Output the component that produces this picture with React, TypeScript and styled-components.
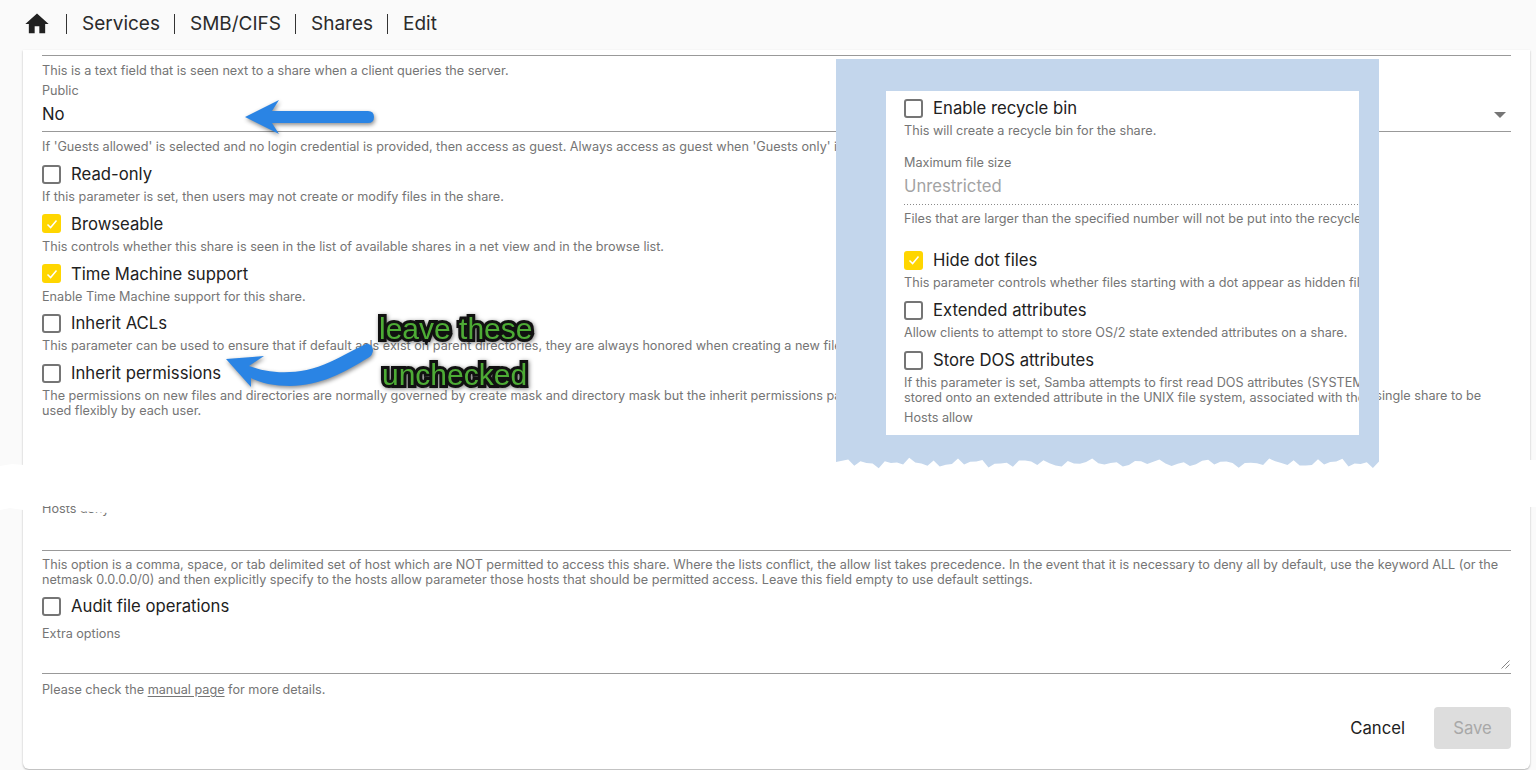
import styled, { createGlobalStyle } from 'styled-components';

type CheckItem = {
  label: string;
  help: string[];
  checked?: boolean;
};

const crumbs = ['Services', 'SMB/CIFS', 'Shares', 'Edit'];

const shareOptions: CheckItem[] = [
  { label: 'Read-only', help: ['If this parameter is set, then users may not create or modify files in the share.'] },
  {
    label: 'Browseable',
    checked: true,
    help: ['This controls whether this share is seen in the list of available shares in a net view and in the browse list.'],
  },
  { label: 'Time Machine support', checked: true, help: ['Enable Time Machine support for this share.'] },
  {
    label: 'Inherit ACLs',
    help: ['This parameter can be used to ensure that if default acls exist on parent directories, they are always honored when creating a new file or subdirectory.'],
  },
  {
    label: 'Inherit permissions',
    help: ['The permissions on new files and directories are normally governed by create mask and directory mask but the inherit permissions parameter overrides this. This can be particularly useful on sites with many users to allow a single share to be used flexibly by each user.'],
  },
];

// torn lower edge of the pasted crop, y values in px from the top of the crop
const tornEdge = Array.from({ length: 90 }, (_, i) => {
  const x = 543 - (i * 543) / 89;
  const y = 404 + 2.4 * Math.sin(i * 1.7) + 1.6 * Math.sin(i * 0.63) - 1.6 * Math.cos(i * 3.1);
  return `${x.toFixed(1)}px ${y.toFixed(1)}px`;
}).join(', ');

const Check = ({ checked }: { checked?: boolean }) => (
  <CheckBox $checked={checked}>
    {checked && (
      <svg width='14' height='14' viewBox='0 0 14 14' fill='none'>
        <path d='M2.5 7.5 L5.6 10.6 L11.5 3.5' stroke='#fff' strokeWidth='1.5' />
      </svg>
    )}
  </CheckBox>
);

export default function App() {
  return (
    <Page>
      <GlobalStyle />

      {/* breadcrumb */}
      <TopBar>
        <HomeIcon viewBox='0 0 24 24'>
          <path d='M10 20v-6h4v6h5v-8h3L12 3 2 12h3v8z' />
        </HomeIcon>
        {crumbs.map((c) => (
          <Crumb key={c}>{c}</Crumb>
        ))}
      </TopBar>

      <Card>
        <FieldLine />
        <Help $top={7}>This is a text field that is seen next to a share when a client queries the server.</Help>

        <FieldLabel $top={6}>Public</FieldLabel>
        <SelectField>
          <span>No</span>
          <Caret />
        </SelectField>
        <Help $top={7}>
          If 'Guests allowed' is selected and no login credential is provided, then access as guest. Always access as guest when 'Guests only' is selected.
        </Help>

        <OptionList>
          {shareOptions.map((item) => (
            <div key={item.label}>
              <CheckRow>
                <Check checked={item.checked} />
                {item.label}
              </CheckRow>
              {item.help.map((h) => (
                <Help key={h}>{h}</Help>
              ))}
            </div>
          ))}
        </OptionList>

        <FieldLabel $top={84}>Hosts deny</FieldLabel>
        <BlankField $height={30} />
        <Help $top={6}>
          This option is a comma, space, or tab delimited set of host which are NOT permitted to access this share. Where the lists conflict, the allow list takes precedence. In the event that it is necessary to deny all by default, use the keyword ALL (or the netmask 0.0.0.0/0) and then explicitly specify to the hosts allow parameter those hosts that should be permitted access. Leave this field empty to use default settings.
        </Help>

        <CheckRow $top={4}>
          <Check />
          Audit file operations
        </CheckRow>

        <FieldLabel $top={6}>Extra options</FieldLabel>
        <BlankField $height={28}>
          <svg width='9' height='9' viewBox='0 0 9 9' fill='none' stroke='#777' strokeWidth='0.9'>
            <path d='M0.5 8.5 L8.5 0.5 M4.5 8.5 L8.5 4.5' />
          </svg>
        </BlankField>
        <Help $top={8}>
          Please check the <u>manual page</u> for more details.
        </Help>

        <Actions>
          <CancelButton>Cancel</CancelButton>
          <SaveButton disabled>Save</SaveButton>
        </Actions>
      </Card>

      {/* torn paper band between the two cuts of the screenshot */}
      <TornBand />

      {/* pasted crop of the lower part of the form */}
      <Inset>
        <InsetSheet>
          <CheckRow>
            <Check />
            Enable recycle bin
          </CheckRow>
          <Help>This will create a recycle bin for the share.</Help>
          <FieldLabel $top={18}>Maximum file size</FieldLabel>
          <DisabledValue>Unrestricted</DisabledValue>
          <Help $top={6}>Files that are larger than the specified number will not be put into the recycle bin.</Help>
          <CheckRow $top={19}>
            <Check checked />
            Hide dot files
          </CheckRow>
          <Help>This parameter controls whether files starting with a dot appear as hidden files.</Help>
          <CheckRow $top={5}>
            <Check />
            Extended attributes
          </CheckRow>
          <Help>Allow clients to attempt to store OS/2 state extended attributes on a share.</Help>
          <CheckRow $top={5}>
            <Check />
            Store DOS attributes
          </CheckRow>
          <Help>If this parameter is set, Samba attempts to first read DOS attributes (SYSTEM, HIDDEN, ARCHIVE, READ-ONLY)</Help>
          <Help>stored onto an extended attribute in the UNIX file system, associated with the file or directory.</Help>
          <FieldLabel $top={6}>Hosts allow</FieldLabel>
        </InsetSheet>
      </Inset>

      {/* annotations */}
      <Arrows viewBox='0 0 1536 770'>
        <path d='M245 117 L279 100 L272 111 L368 111 Q374 111 374 117 Q374 123 368 123 L272 123 L279 134 Z' />
        <path d='M226 359 L264 356 L249 366 C270 374 300 376 330 362 C345 355 355 349 366 344 Q372 343 373 350 Q373 355 368 358 C345 372 320 386 290 386 C275 386 260 383 251 378 L251 387 Z' />
      </Arrows>
      <Note $left={379} $top={311}>leave these</Note>
      <Note $left={382} $top={357}>unchecked</Note>
    </Page>
  );
}

/** Styles */

const GlobalStyle = createGlobalStyle`
  html, body {
    margin: 0;
    padding: 0;
    background: #fafafa;
    overflow: hidden;
  }
  body {
    font-family: Inter, "Liberation Sans", sans-serif;
    color: #212121;
  }
`;

const Page = styled.div`
  position: relative;
  width: 1536px;
  height: 770px;
  overflow: hidden;
  background: #fafafa;
`;

const TopBar = styled.div`
  height: 47px;
  padding-left: 26px;
  display: flex;
  align-items: center;
`;

const HomeIcon = styled.svg`
  width: 28px;
  height: 28px;
  margin-left: -3px;
  margin-right: 15px;
  fill: #212121;
`;

const Crumb = styled.div`
  font-size: 19px;
  line-height: 20px;
  padding: 0 14px 0 15px;
  border-left: 1px solid #333;
  color: #2b2b2b;
`;

const Card = styled.div`
  margin: 3px 6px 0 23px;
  height: 719px;
  box-sizing: border-box;
  padding: 5px 19px 0;
  background: #fff;
  border-radius: 0 0 6px 6px;
  box-shadow: 0 1px 2px rgba(0, 0, 0, 0.3);
`;

const FieldLine = styled.div`
  height: 1px;
  background: #999;
  margin-bottom: 1px;
`;

const Help = styled.div<{ $top?: number }>`
  margin-top: ${(p) => p.$top ?? 0}px;
  font-size: 12.65px;
  line-height: 15px;
  color: #757575;

  u {
    text-underline-offset: 2px;
  }
`;

const FieldLabel = styled.div<{ $top?: number }>`
  margin-top: ${(p) => p.$top ?? 0}px;
  font-size: 12.65px;
  line-height: 14px;
  color: #757575;
`;

const SelectField = styled.div`
  height: 31px;
  display: flex;
  align-items: center;
  justify-content: space-between;
  padding: 0 5px 2px 0;
  font-size: 16.7px;
  border-bottom: 1px solid #999;
`;

const Caret = styled.div`
  width: 0;
  height: 0;
  border-left: 6px solid transparent;
  border-right: 6px solid transparent;
  border-top: 6px solid #757575;
  margin-top: 2px;
`;

const BlankField = styled.div<{ $height: number }>`
  height: ${(p) => p.$height}px;
  display: flex;
  align-items: flex-end;
  justify-content: flex-end;
  padding: 0 1px 4px 0;
  box-sizing: content-box;
  border-bottom: 1px solid #999;
`;

const OptionList = styled.div`
  margin-top: 5px;
  display: flex;
  flex-direction: column;
  gap: 4.75px;
`;

const CheckRow = styled.div<{ $top?: number }>`
  margin-top: ${(p) => p.$top ?? 0}px;
  height: 30px;
  display: flex;
  align-items: center;
  gap: 10px;
  font-size: 16.7px;
  color: #212121;
`;

const CheckBox = styled.div<{ $checked?: boolean }>`
  width: 19px;
  height: 19px;
  box-sizing: border-box;
  flex-shrink: 0;
  display: flex;
  align-items: center;
  justify-content: center;
  border-radius: 3px;
  border: ${(p) => (p.$checked ? 'none' : '2px solid #757575')};
  background: ${(p) => (p.$checked ? '#ffd600' : 'transparent')};
`;

const Actions = styled.div`
  margin-top: 10px;
  display: flex;
  justify-content: flex-end;
  align-items: center;
  gap: 29px;
`;

const CancelButton = styled.button`
  border: none;
  background: none;
  padding: 0;
  font: inherit;
  font-size: 16.7px;
  color: #212121;
`;

const SaveButton = styled.button`
  width: 77px;
  height: 42px;
  border: none;
  border-radius: 4px;
  background: #dddddd;
  font: inherit;
  font-size: 16.7px;
  color: #a8a8a8;
`;

const TornBand = styled.div`
  position: absolute;
  left: 0;
  right: 0;
  top: 460px;
  height: 56px;
  background: #fff;
  clip-path: polygon(
    0 6px, 12px 4px, 24px 5px, 40px 0, 1536px 0,
    1536px 47px, 120px 47px, 108px 53px, 78px 51px, 75px 46px,
    40px 46px, 23px 50px, 10px 48px, 0 50px
  );
`;

const Inset = styled.div`
  position: absolute;
  left: 836px;
  top: 59px;
  width: 543px;
  height: 410px;
  box-sizing: border-box;
  padding: 32px 20px 0 50px;
  background: #c3d6ec;
  clip-path: polygon(0 0, 543px 0, ${tornEdge});
`;

const InsetSheet = styled.div`
  height: 344px;
  box-sizing: border-box;
  padding: 2px 0 0 18px;
  background: #fff;
  overflow: hidden;
  white-space: nowrap;
`;

const DisabledValue = styled.div`
  height: 35px;
  line-height: 32px;
  font-size: 16.7px;
  color: #a3a3a3;
  background: linear-gradient(to right, #8a8a8a 1px, transparent 1px) left bottom / 3px 1px repeat-x;
`;

const Arrows = styled.svg`
  position: absolute;
  inset: 0;
  width: 1536px;
  height: 770px;
  fill: #2a84e4;
  filter: drop-shadow(1px 2px 2px rgba(0, 0, 0, 0.45));
`;

const Note = styled.div<{ $left: number; $top: number }>`
  position: absolute;
  left: ${(p) => p.$left}px;
  top: ${(p) => p.$top}px;
  font-family: 'Liberation Sans', sans-serif;
  font-size: 30px;
  line-height: 36px;
  white-space: nowrap;
  color: #4dab35;
  -webkit-text-stroke: 6px #111;
  paint-order: stroke fill;
  filter: drop-shadow(1px 1px 2px rgba(0, 0, 0, 0.5));
`;
